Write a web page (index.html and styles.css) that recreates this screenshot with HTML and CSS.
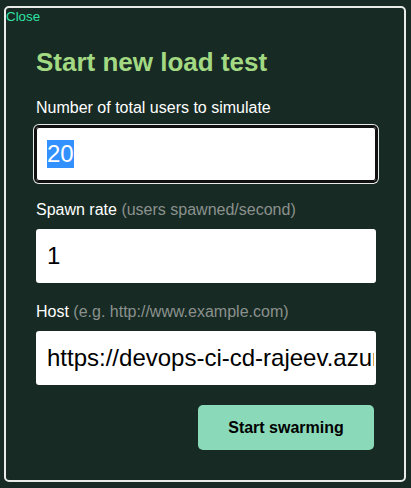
FILE: index.html
```html
<!DOCTYPE html>
<html lang="en">
<head>
<meta charset="utf-8">
<title>Start new load test</title>
<link rel="stylesheet" href="styles.css">
</head>
<body>
<div class="page"></div>
<div class="modal">
  <button class="close" type="button">Close</button>
  <form class="start-form">
    <h2 class="title">Start new load test</h2>
    <label class="field-label" for="user_count">Number of total users to simulate</label>
    <input class="field focused" id="user_count" type="text" value="20">
    <label class="field-label" for="spawn_rate">Spawn rate <span class="hint">(users spawned/second)</span></label>
    <input class="field" id="spawn_rate" type="text" value="1">
    <label class="field-label" for="host">Host <span class="hint">(e.g. http://www.example.com)</span></label>
    <input class="field" id="host" type="text" value="https://devops-ci-cd-rajeev.azurewebsites.net">
    <div class="actions">
      <button class="submit" type="button">Start swarming</button>
    </div>
  </form>
</div>
<script src="script.js"></script>
</body>
</html>
```

FILE: styles.css
```css
html, body {
  margin: 0;
  padding: 0;
  background: #172b24;
  font-family: "Liberation Sans", Arial, sans-serif;
}

.page {
  height: 488px;
  background: #172b24;
}

.modal {
  position: absolute;
  left: 4px;
  top: 6px;
  width: 402px;
  height: 476px;
  box-sizing: border-box;
  border: 2px solid #e8ebe8;
  border-radius: 5px;
  background: #172b24;
}

.close {
  display: block;
  margin: 1px 0 0 0;
  padding: 0;
  border: none;
  background: none;
  color: #2ee3a4;
  font-family: "Liberation Sans", Arial, sans-serif;
  font-size: 13.333px;
  line-height: 16px;
}

.start-form {
  padding: 0 28px 0 30px;
}

.title {
  margin: 22px 0 22px 0;
  color: #a3d983;
  font-size: 26px;
  line-height: 30px;
  font-weight: bold;
}

.field-label {
  display: block;
  margin: 0 0 10px 0;
  color: #ffffff;
  font-size: 16px;
  line-height: 18px;
}

.hint {
  color: #8c918e;
}

.field {
  display: block;
  box-sizing: border-box;
  width: 340px;
  height: 54px;
  margin: 0 0 20px 0;
  padding: 0 2px 0 11px;
  border: none;
  border-radius: 3px;
  background: #ffffff;
  color: #000000;
  font-family: "Liberation Sans", Arial, sans-serif;
  font-size: 24px;
  outline: none;
}

.field.focused {
  box-shadow: inset 0 0 0 1px #111111, 0 0 0 2px #111111, 0 0 0 3px #e8ebe8;
}

.field::selection {
  background: #3390ff;
  color: #ffffff;
}

.actions {
  display: flex;
  justify-content: flex-end;
  padding-right: 2px;
}

.submit {
  width: 176px;
  height: 45px;
  border: none;
  border-radius: 5px;
  background: #8ad9b8;
  color: #000000;
  font-family: "Liberation Sans", Arial, sans-serif;
  font-size: 16px;
  font-weight: bold;
}
```

FILE: script.js
```js
var f = document.getElementById('user_count');
f.focus();
f.select();
```
